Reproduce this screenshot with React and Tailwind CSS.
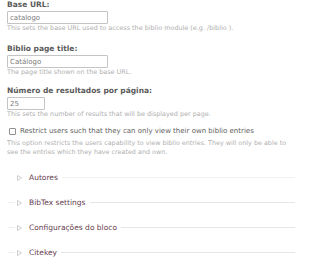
import { useState } from 'react';

const groups = ['Autores', 'BibTex settings', 'Configurações do bloco', 'Citekey'];

function Arrow() {
  return (
    <svg className="w-[5px] h-[6px]" viewBox="0 0 5 6" fill="none">
      <path d="M0.5 0.5 4.5 3 0.5 5.5Z" stroke="#cfcfcf" strokeWidth="1" />
    </svg>
  );
}

function TextField({ label, value, width, help, className = '' }) {
  const [val, setVal] = useState(value);
  return (
    <div className={className}>
      <label className="block font-bold text-[7.5px] leading-[10px] text-[#5a5a5a]">
        {label}
      </label>
      <input
        value={val}
        onChange={(e) => setVal(e.target.value)}
        className={`block mt-[1px] h-[13px] ${width} border border-[#c4c4c4] rounded-[1px] px-[2px] text-[7px] text-[#7a7a7a] outline-none`}
      />
      <div className="text-[6.45px] leading-[8px] text-[#b0b0b0] whitespace-nowrap">{help}</div>
    </div>
  );
}

export default function App() {
  const [restrict, setRestrict] = useState(false);

  return (
    <div className="w-[300px] h-[257px] overflow-hidden bg-white font-['DejaVu_Sans',sans-serif] pl-[7px] pr-[4px]">
      <TextField
        label="Base URL:"
        value="catalogo"
        width="w-[101px]"
        help="This sets the base URL used to access the biblio module (e.g. /biblio )."
      />
      <TextField
        className="mt-[12px]"
        label="Biblio page title:"
        value="Catálogo"
        width="w-[101px]"
        help="The page title shown on the base URL."
      />
      <TextField
        className="mt-[10px]"
        label="Número de resultados por página:"
        value="25"
        width="w-[38px]"
        help="This sets the number of results that will be displayed per page."
      />

      <div className="mt-[8px]">
        <label className="flex items-center h-[10px] pl-[2px] text-[7px] text-[#606060] whitespace-nowrap">
          <input
            type="checkbox"
            checked={restrict}
            onChange={() => setRestrict(!restrict)}
            className="appearance-none w-[7px] h-[7px] border border-[#8f8f8f] rounded-[1px] mr-[4px] bg-white"
          />
          Restrict users such that they can only view their own biblio entries
        </label>
        <div className="mt-[3px] text-[6.4px] leading-[9px] text-[#b0b0b0]">
          <div className="whitespace-nowrap">
            This option restricts the users capability to view biblio entries. They will only be able to
          </div>
          <div>see the entries which they have created and own.</div>
        </div>
      </div>

      {/* collapsed fieldsets */}
      <div className="mt-[8px]">
        {groups.map((g, i) => (
          <div key={g} className="flex items-center h-[25px]">
            <div className={`w-[7px] h-px ml-[1px] ${i === 0 ? '' : 'bg-[#eeeeee]'}`} />
            <div className="ml-[2px]">
              <Arrow />
            </div>
            <span className="ml-[7px] text-[7.5px] text-[#66404f] whitespace-nowrap">{g}</span>
            <div className={`flex-1 h-px ml-[4px] mr-[1px] ${i === 0 ? 'bg-[#f2f2f2]' : 'bg-[#e6e6e6]'}`} />
          </div>
        ))}
      </div>
    </div>
  );
}
